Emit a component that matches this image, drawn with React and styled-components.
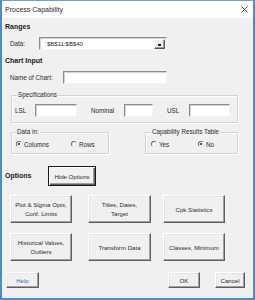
import React from 'react';
import styled, { createGlobalStyle } from 'styled-components';

const Global = createGlobalStyle`
  html, body { margin: 0; padding: 0; background: #ffffff; }
  body { font-family: "Liberation Sans", Arial, sans-serif; }
  * { box-sizing: border-box; }
`;

const Window = styled.div`
  width: 255px;
  height: 300px;
  border: 2px solid #4f8ac6;
  border-top: 1px solid #6f9fd2;
  background: #f0f0f0;
  display: flex;
  flex-direction: column;
`;

const TitleBar = styled.div`
  height: 17px;
  flex: none;
  background: #ffffff;
  display: flex;
  align-items: center;
  justify-content: space-between;
  padding: 0 5px 0 3px;
  font-size: 7px;
  color: #2a2a2a;
`;

const Body = styled.div`
  flex: 1;
  display: flex;
  flex-direction: column;
  padding-left: 3px;
  color: #2a2a2a;
  font-size: 6.3px;
`;

const Heading = styled.div`
  margin-top: ${p => p.mt}px;
  width: ${p => (p.w ? `${p.w}px` : 'auto')};
  flex: none;
  height: 10px;
  line-height: 10px;
  font-size: 7px;
  font-weight: bold;
  color: #1a1a1a;
`;

const Row = styled.div`
  margin-top: ${p => p.mt}px;
  height: ${p => p.h}px;
  padding-left: ${p => p.pl || 0}px;
  padding-right: ${p => p.pr || 0}px;
  display: flex;
  align-items: center;
`;

const Label = styled.span`
  width: ${p => p.w}px;
  flex: none;
  font-size: 6.3px;
  white-space: nowrap;
`;

const TextBox = styled.div`
  width: ${p => p.w}px;
  height: 13px;
  flex: none;
  background: #ffffff;
  border: 1px solid;
  border-color: #8c8c8c #f4f4f4 #f4f4f4 #8c8c8c;
  box-shadow: inset 1px 1px 0 #d4d4d4;
  display: flex;
  align-items: center;
  padding-left: ${p => p.pl || 2}px;
  font-size: 6px;
`;

const BoxText = styled.span`
  flex: 1;
`;

const RefButton = styled.span`
  width: 11px;
  height: 10px;
  margin-right: 1px;
  background: #f0f0f0;
  border: 1px solid;
  border-color: #ffffff #555 #555 #ffffff;
  box-shadow: inset -1px -1px 0 #a0a0a0;
  display: flex;
  align-items: flex-end;
  justify-content: center;
  padding-bottom: 2px;
  &::after {
    content: '';
    width: 3px;
    height: 1.5px;
    background: #222;
  }
`;

const Group = styled.div`
  position: relative;
  margin-left: ${p => p.ml || 0}px;
  margin-top: ${p => p.mt || 0}px;
  width: ${p => p.w}px;
  height: ${p => p.h}px;
  flex: none;
  border: 1px solid #d3d3d3;
  box-shadow: inset 1px 1px 0 #ffffff, 1px 1px 0 #ffffff;
  display: flex;
  align-items: center;
  padding: 2px 0 0 ${p => p.pl || 0}px;
`;

const Legend = styled.span`
  position: absolute;
  top: -5px;
  left: ${p => p.left}px;
  padding: 0 1px;
  background: #f0f0f0;
  line-height: 8px;
  font-size: 6.3px;
  white-space: nowrap;
`;

const GroupsRow = styled.div`
  margin-top: 9px;
  margin-left: 6px;
  display: flex;
  gap: 36px;
`;

const RadioItem = styled.span`
  width: ${p => (p.w ? `${p.w}px` : 'auto')};
  display: flex;
  align-items: center;
  gap: 2px;
  font-size: 6.3px;
  white-space: nowrap;
`;

const RadioCircle = styled.span`
  width: 6px;
  height: 6px;
  flex: none;
  border-radius: 50%;
  background: #ffffff;
  border: 1px solid;
  border-color: #6e6e6e #e8e8e8 #e8e8e8 #6e6e6e;
  display: flex;
  align-items: center;
  justify-content: center;
  &::after {
    content: '';
    width: 2px;
    height: 2px;
    border-radius: 50%;
    background: ${p => (p.checked ? '#1a1a1a' : 'transparent')};
  }
`;

const Button = styled.button`
  width: ${p => p.w}px;
  height: ${p => p.h}px;
  flex: none;
  margin: 0;
  padding: 0;
  background: #f0f0f0;
  font-family: "Liberation Sans", Arial, sans-serif;
  font-size: 6.1px;
  line-height: 9px;
  color: ${p => (p.blue ? '#2f6fd6' : '#2a2a2a')};
  text-align: center;
  border: 1px solid;
  border-color: ${p => (p.focused ? '#1a1a1a' : '#ffffff #5e5e5e #5e5e5e #ffffff')};
  box-shadow: ${p =>
    p.focused
      ? 'inset 1px 1px 0 #ffffff, inset -1px -1px 0 #5e5e5e, inset -2px -2px 0 #a0a0a0'
      : 'inset -1px -1px 0 #a0a0a0, inset 1px 1px 0 #e6e6e6'};
`;

const ButtonRow = styled.div`
  margin-top: ${p => p.mt}px;
  margin-left: 5px;
  display: flex;
  align-items: center;
`;

const Spacer = styled.span`
  width: ${p => (p.w ? `${p.w}px` : 'auto')};
  flex: ${p => (p.grow ? 1 : 'none')};
`;

const CloseIcon = () => (
  <svg width="7" height="7" viewBox="0 0 7 7">
    <path d="M0.5 0.5 L6.5 6.5 M6.5 0.5 L0.5 6.5" stroke="#3a3a3a" strokeWidth="0.9" />
  </svg>
);

export default function App() {
  return (
    <>
      <Global />
      <Window>
        <TitleBar>
          <span>Process Capability</span>
          <CloseIcon />
        </TitleBar>
        <Body>
          <Heading mt={4}>Ranges</Heading>
          <Row mt={5} h={13} pl={5}>
            <Label w={29}>Data:</Label>
            <TextBox w={128} pl={7}>
              <BoxText>$B$11:$B$40</BoxText>
              <RefButton />
            </TextBox>
          </Row>

          <Heading mt={6}>Chart Input</Heading>
          <Row mt={5} h={13} pl={5}>
            <Label w={53}>Name of Chart:</Label>
            <TextBox w={104} />
          </Row>

          <Group ml={6} mt={11} w={227} h={28} pl={3}>
            <Legend left={5}>Specifications</Legend>
            <Label w={20}>LSL</Label>
            <TextBox w={42} />
            <Spacer w={14} />
            <Label w={33}>Nominal</Label>
            <TextBox w={29} />
            <Spacer w={14} />
            <Label w={22}>USL</Label>
            <TextBox w={41} />
          </Group>

          <GroupsRow>
            <Group w={98} h={22} pl={4}>
              <Legend left={4}>Data in:</Legend>
              <RadioItem w={55}>
                <RadioCircle checked />
                Columns
              </RadioItem>
              <RadioItem>
                <RadioCircle />
                Rows
              </RadioItem>
            </Group>
            <Group w={93} h={22} pl={5}>
              <Legend left={5}>Capability Results Table</Legend>
              <RadioItem w={47}>
                <RadioCircle />
                Yes
              </RadioItem>
              <RadioItem>
                <RadioCircle checked />
                No
              </RadioItem>
            </Group>
          </GroupsRow>

          <Row mt={12} h={20}>
            <Heading mt={0} w={43}>Options</Heading>
            <Button w={48} h={20} focused>Hide Options</Button>
          </Row>

          <ButtonRow mt={9}>
            <Button w={62} h={28}>Plot &amp; Sigma Opts,<br />Conf. Limits</Button>
            <Spacer w={16} />
            <Button w={63} h={28}>Titles, Dates,<br />Target</Button>
            <Spacer w={12} />
            <Button w={62} h={28}>Cpk Statistics</Button>
          </ButtonRow>

          <ButtonRow mt={10}>
            <Button w={62} h={28}>Historical Values,<br />Outliers</Button>
            <Spacer w={16} />
            <Button w={63} h={28}>Transform Data</Button>
            <Spacer w={12} />
            <Button w={62} h={28}>Classes, Minimum</Button>
          </ButtonRow>

          <Row mt={11} h={16} pl={1} pr={8}>
            <Button w={33} h={16} blue>Help</Button>
            <Spacer grow />
            <Button w={32} h={16}>OK</Button>
            <Spacer w={15} />
            <Button w={30} h={16}>Cancel</Button>
          </Row>
        </Body>
      </Window>
    </>
  );
}
